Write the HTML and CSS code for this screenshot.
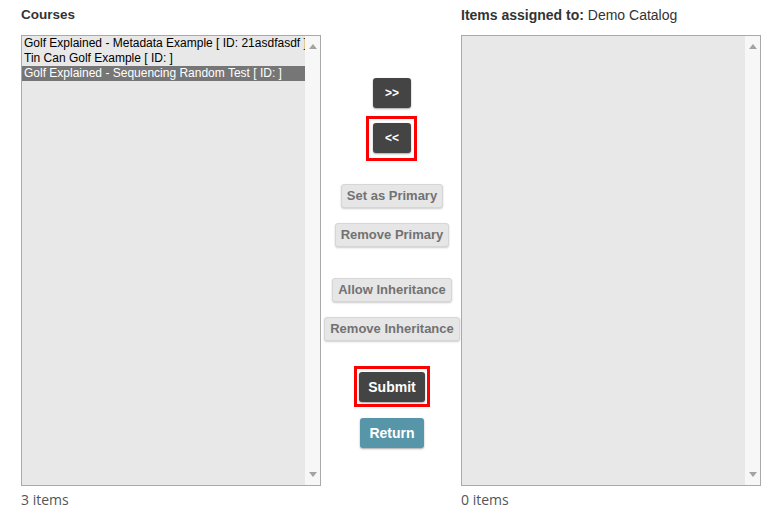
FILE: index.html
```html
<!DOCTYPE html>
<html>
<head>
<meta charset="utf-8">
<link rel="stylesheet" href="styles.css">
</head>
<body>
<div class="layout">
  <div class="col">
    <div class="heading heading-left"><b>Courses</b></div>
    <div class="listbox">
      <div class="options">
        <div class="opt">Golf Explained - Metadata Example [ ID: 21asdfasdf ]</div>
        <div class="opt">Tin Can Golf Example [ ID: ]</div>
        <div class="opt selected">Golf Explained - Sequencing Random Test [ ID: ]</div>
      </div>
      <div class="scrollbar">
        <span class="arrow up"></span>
        <span class="arrow down"></span>
      </div>
    </div>
    <div class="count">3 items</div>
  </div>

  <div class="middle">
    <div class="group">
      <button class="btn dark arrowbtn">&gt;&gt;</button>
      <button class="btn dark arrowbtn hl hl-wide">&lt;&lt;</button>
    </div>
    <div class="group">
      <button class="btn light">Set as Primary</button>
      <button class="btn light">Remove Primary</button>
    </div>
    <div class="group">
      <button class="btn light">Allow Inheritance</button>
      <button class="btn light">Remove Inheritance</button>
    </div>
    <div class="group group-last">
      <button class="btn dark hl">Submit</button>
      <button class="btn teal">Return</button>
    </div>
  </div>

  <div class="col">
    <div class="heading"><b>Items assigned to:</b> <span class="catalog">Demo Catalog</span></div>
    <div class="listbox">
      <div class="options"></div>
      <div class="scrollbar">
        <span class="arrow up"></span>
        <span class="arrow down"></span>
      </div>
    </div>
    <div class="count">0 items</div>
  </div>
</div>
</body>
</html>
```

FILE: styles.css
```css
html, body {
  margin: 0;
  padding: 0;
  background: #ffffff;
}

body {
  font-family: "Liberation Sans", Arial, sans-serif;
  color: #333333;
}

.layout {
  display: flex;
  padding: 7px 0 0 21px;
}

.col {
  width: 300px;
  display: flex;
  flex-direction: column;
}

.heading {
  font-size: 14px;
  line-height: 16px;
  height: 16px;
  margin-bottom: 12px;
  color: #333333;
  white-space: nowrap;
}

.heading-left {
  font-size: 13.5px;
}

.catalog {
  font-weight: normal;
}

.listbox {
  box-sizing: border-box;
  height: 451px;
  border: 1px solid #a9a9a9;
  background: #e8e8e8;
  display: flex;
}

.options {
  flex: 1;
  min-width: 0;
  overflow: hidden;
}

.opt {
  font-size: 12px;
  line-height: 15px;
  height: 15px;
  padding: 0 2px;
  color: #000000;
  white-space: nowrap;
  overflow: hidden;
}

.opt.selected {
  background: #767676;
  color: #ffffff;
}

.scrollbar {
  width: 15px;
  background: #f7f7f7;
  display: flex;
  flex-direction: column;
  justify-content: space-between;
  align-items: center;
  padding: 8px 0 8px;
  box-sizing: border-box;
}

.arrow {
  width: 0;
  height: 0;
  border-left: 4px solid transparent;
  border-right: 4px solid transparent;
}

.arrow.up {
  border-bottom: 5px solid #a3a3a3;
}

.arrow.down {
  border-top: 5px solid #a3a3a3;
}

.count {
  font-family: "Open Sans", sans-serif;
  font-size: 14px;
  line-height: 20px;
  margin-top: 4px;
  color: #555555;
}

.middle {
  box-sizing: border-box;
  width: 140px;
  display: flex;
  flex-direction: column;
  align-items: center;
  padding-top: 71px;
  padding-left: 2px;
  gap: 31px;
}

.group {
  display: flex;
  flex-direction: column;
  align-items: center;
  gap: 15px;
}

.group-last {
  gap: 16px;
}

.btn {
  font-family: "Liberation Sans", Arial, sans-serif;
  font-weight: bold;
  border-radius: 3px;
  cursor: pointer;
  margin: 0;
  position: relative;
}

.btn.dark {
  background: #444444;
  color: #ffffff;
  border: none;
  font-size: 14px;
  line-height: 16px;
  padding: 7px 9px;
  box-shadow: 0 1px 2px rgba(0, 0, 0, 0.35);
}

.btn.arrowbtn {
  font-size: 12px;
  width: 38px;
  height: 30px;
  padding: 0;
}

.btn.teal {
  background: #5796a9;
  color: #ffffff;
  border: none;
  font-size: 14px;
  line-height: 16px;
  padding: 7px 9px;
  box-shadow: 0 1px 2px rgba(0, 0, 0, 0.35);
}

.btn.light {
  background: #e6e6e6;
  color: #727272;
  border: 1px solid #d6d6d6;
  font-size: 13px;
  line-height: 16px;
  padding: 3px 5px;
  box-shadow: 0 1px 2px rgba(0, 0, 0, 0.2);
}

.hl::after {
  content: "";
  position: absolute;
  top: -6px;
  left: -5px;
  right: -5px;
  bottom: -5px;
  border: 3px solid #ff0000;
  pointer-events: none;
}

.hl-wide::after {
  top: -7px;
  left: -7px;
  right: -6px;
  bottom: -8px;
}
```
